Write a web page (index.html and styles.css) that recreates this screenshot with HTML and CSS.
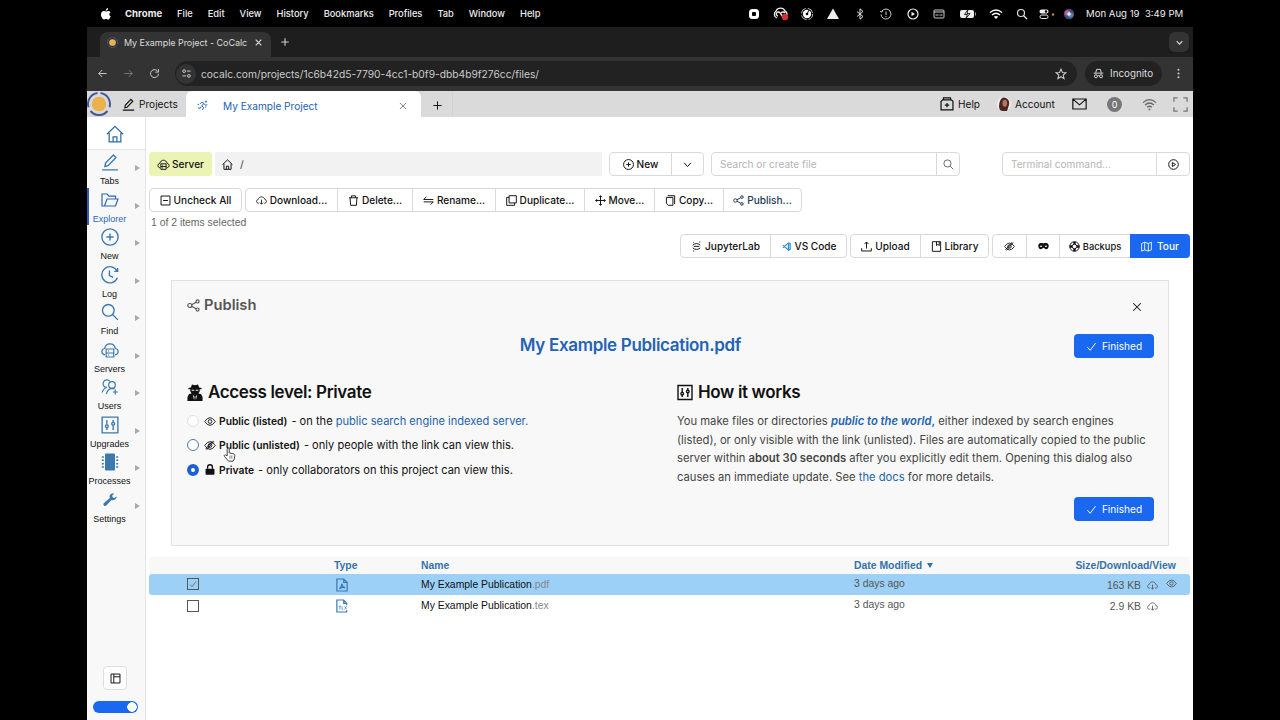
FILE: index.html
```
<!DOCTYPE html>
<html lang="en">
<head>
  <meta charset="UTF-8" />
  <meta name="viewport" content="width=device-width, initial-scale=1.0"/>
  <title>My Example Project - CoCalc</title>
  <link rel="stylesheet" href="styles.css">
</head>
<body>
  <!-- icon sprite -->
  <svg class="sprite" viewBox="0 0 16 16">
    <symbol id="i-apple" viewBox="0 0 16 16"><path fill="currentColor" stroke="none" d="M10.8 0c.1 1-.3 1.900-.9 2.600-.6.700-1.400 1.200-2.300 1.100-.1-.9.300-1.900.9-2.500C9.100.500 10 .1 10.800 0zM14 5.500c-1 .6-1.600 1.500-1.600 2.700 0 1.300.8 2.400 2 2.900-.3.800-.6 1.500-1.100 2.200-.7 1-1.400 2.100-2.500 2.100s-1.400-.7-2.700-.7-1.700.7-2.700.7c-1.100 0-1.900-1-2.600-2C1.300 11.300.8 8.200 2 6.100c.7-1.300 2-2 3.300-2 1.100 0 2 .7 2.800.7.700 0 1.900-.8 3.300-.7 1 0 2 .5 2.600 1.400z"/></symbol>
    <symbol id="i-x" viewBox="0 0 16 16"><path d="M3 3l10 10M13 3L3 13"/></symbol>
    <symbol id="i-plus" viewBox="0 0 16 16"><path d="M8 2v12M2 8h12"/></symbol>
    <symbol id="i-left" viewBox="0 0 16 16"><path d="M14 8H2.500M7.500 3l-5 5 5 5"/></symbol>
    <symbol id="i-right" viewBox="0 0 16 16"><path d="M2 8h11.500M8.500 3l5 5-5 5"/></symbol>
    <symbol id="i-reload" viewBox="0 0 16 16"><path d="M13 5.200A5.800 5.800 0 1 0 13.800 8.500M13.800 1.500V6H9.300"/></symbol>
    <symbol id="i-tune" viewBox="0 0 16 16"><circle cx="4.500" cy="4.500" r="2"/><circle cx="11.500" cy="11.500" r="2"/><path d="M8.500 4.500H14M2 11.500h5.500"/></symbol>
    <symbol id="i-star" viewBox="0 0 16 16"><path d="M8 1.500l1.900 4.400 4.600.4-3.500 3.100 1.100 4.700L8 11.600l-4.100 2.500L5 9.400 1.500 6.300l4.600-.4z"/></symbol>
    <symbol id="i-incog" viewBox="0 0 16 16"><path d="M1 7.500h14M4 7l1.200-5h5.600L12 7"/><circle cx="4.300" cy="12" r="2.200"/><circle cx="11.700" cy="12" r="2.200"/><path d="M6.500 11.500q1.500-1 3 0"/></symbol>
    <symbol id="i-dots" viewBox="0 0 16 16"><g fill="currentColor" stroke="none"><circle cx="8" cy="2.500" r="1.500"/><circle cx="8" cy="8" r="1.500"/><circle cx="8" cy="13.500" r="1.500"/></g></symbol>
    <symbol id="i-chev" viewBox="0 0 16 16"><path d="M3 5.500l5 5.500 5-5.500"/></symbol>
    <symbol id="i-logo" viewBox="0 0 24 24"><circle cx="12" cy="12" r="7.300" fill="#eab14c" stroke="none"/><g fill="none" stroke="#425b98" stroke-width="2"><path d="M10.500 1.100A11 11 0 0 0 1.500 15.200"/><path d="M13.500 1.100A11 11 0 0 1 22.500 15.200"/><path d="M3.500 19a11 11 0 0 0 17 0"/></g></symbol>
    <symbol id="i-edit" viewBox="0 0 16 16"><path d="M1 15h14M3.500 12l.5-3 7-7.300 2.300 2.300-7 7.300z"/></symbol>
    <symbol id="i-run" viewBox="0 0 16 16"><path d="M4.500 5.500L7 3.500l3 1.200-3 4 2.500 2-1.500 4M6 9.500L4.500 12 1.500 11.500M10.500 5.500l1.500 2 3-.5M1 6.500l2-.5M11.500 11l2-1.500"/><circle cx="13" cy="2.300" r="1"/></symbol>
    <symbol id="i-help" viewBox="0 0 16 16"><path d="M1.200 5L3 3.200h10L14.800 5v9.800H1.200zM4 3V1h8v2M8 6.800v5M5.500 9.300h5"/></symbol>
    <symbol id="i-mail" viewBox="0 0 18 14"><path d="M1 1h16v12H1zM1.500 1.500L9 8l7.500-6.500"/></symbol>
    <symbol id="i-wifi" viewBox="0 0 16 14"><path d="M1 5q7-6.500 14 0M3.300 7.600q4.700-4.500 9.400 0M5.500 10q2.500-2.300 5 0"/><circle cx="8" cy="12.300" r="1" fill="currentColor" stroke="none"/></symbol>
    <symbol id="i-full" viewBox="0 0 16 16"><path d="M1 5V1h4M11 1h4v4M15 11v4h-4M5 15H1v-4"/></symbol>
    <symbol id="i-home" viewBox="0 0 16 16"><path d="M.8 8.200L8 1.200l7.200 7M2.800 7v8h10.400V7M6.300 15v-4.500h3.400V15"/></symbol>
    <symbol id="i-folder" viewBox="0 0 18 14"><path d="M3.500 13H1V1h5l2 2.200h6.500V6M3.500 13L6 6h11l-2.500 7z"/></symbol>
    <symbol id="i-pluso" viewBox="0 0 16 16"><circle cx="8" cy="8" r="7.200"/><path d="M8 4.800v6.400M4.800 8h6.400"/></symbol>
    <symbol id="i-clock" viewBox="0 0 16 16"><path d="M14.300 4.500A7.200 7.200 0 1 0 14.600 10.500M14.800 1.800v3h-3M7.500 4v4.500l3.300 1.700"/></symbol>
    <symbol id="i-find" viewBox="0 0 16 16"><circle cx="6.500" cy="6.500" r="5.200"/><path d="M10.300 10.300L15 15"/></symbol>
    <symbol id="i-server" viewBox="0 0 18 16"><path d="M4 12.800C-.2 12.500 0 7 3.600 6.500 5 .2 13 .2 14.400 6.500 18 7 18.200 12.500 14 12.800"/><path d="M5.200 7h7.600v8H5.200zM5.200 11h7.600M7 9h1M7 13h1"/></symbol>
    <symbol id="i-users" viewBox="0 0 18 16"><path d="M6 8.500A3.800 3.800 0 1 1 8.800 2.300M6 8.500Q2 9.500 1.200 13.500"/><circle cx="11" cy="6" r="3.300"/><path d="M5.500 15q1-5.500 5.500-5.700 1.500 0 2.500.6M14.300 10.500v5M11.800 13h5"/></symbol>
    <symbol id="i-sliders" viewBox="0 0 16 16"><path d="M1 1h14v14H1zM5.200 3.500v4.200M5.200 10.500v2M10.800 3.500v2M10.800 8.500v4"/><circle cx="5.200" cy="9.200" r="1.300"/><circle cx="10.800" cy="6.900" r="1.300"/></symbol>
    <symbol id="i-chip" viewBox="0 0 18 18"><rect x="4" y=".5" width="10" height="17" rx="1" fill="currentColor" stroke="none"/><path d="M.8 4h2M.8 7.300h2M.8 10.700h2M.8 14h2M15.200 4h2M15.200 7.300h2M15.200 10.700h2M15.200 14h2" stroke-width="1.600"/></symbol>
    <symbol id="i-wrench" viewBox="0 0 20 20"><path fill="currentColor" stroke="none" d="M17.300 6.200l-2.600 1.500-1.900-.8-.3-2L14.700 3C12.700 2.300 10.700 3 9.800 4.700c-.5 1.100-.4 2.100 0 3L3.400 13.200c-1.900 1.900.6 4.600 2.500 2.900l5.700-6.200c1.100.4 2.400.3 3.500-.2 1.700-.8 2.500-2.200 2.200-3.500z"/></symbol>
    <symbol id="i-minus" viewBox="0 0 16 16"><path d="M1.500 1.500h13v13h-13zM4.500 8h7"/></symbol>
    <symbol id="i-cloud" viewBox="0 0 18 16"><path d="M4.500 12.500C-.3 12.500 0 7 3.600 6.300 5 .6 13 .6 14.400 6.300 18 7 18.300 12.500 13.500 12.500M9 6.500V14M6.500 11.500L9 14l2.500-2.500"/></symbol>
    <symbol id="i-trash" viewBox="0 0 16 16"><path d="M1.500 4h13M3 4l.8 11h8.400L13 4M5 4V1.200h6V4"/></symbol>
    <symbol id="i-swap" viewBox="0 0 16 16"><path d="M1 6.500h14M1 6.500L5 2.500M15 10H1M15 10l-4 4"/></symbol>
    <symbol id="i-dup" viewBox="0 0 16 16"><path d="M4.500 1h10.500v10.500H4.500zM4.500 3.500H1V15h11.500v-3.500"/></symbol>
    <symbol id="i-move" viewBox="0 0 16 16"><path d="M8 1v14M1 8h14M6 3l2-2 2 2M6 13l2 2 2-2M3 6L1 8l2 2M13 6l2 2-2 2"/></symbol>
    <symbol id="i-copy" viewBox="0 0 16 16"><path d="M4 1h10v12M2 3.500h9.500V15H5l-3-3z"/></symbol>
    <symbol id="i-share" viewBox="0 0 16 16"><circle cx="3.500" cy="8" r="2.500"/><circle cx="13" cy="3" r="1.900"/><circle cx="13" cy="13" r="1.900"/><path d="M5.700 7L11.300 4M5.700 9l5.600 3"/></symbol>
    <symbol id="i-jup" viewBox="0 0 16 16"><path d="M2.500 6q5.500-4.500 11 0M2.500 10q5.500 4.500 11 0M4 7.800h8"/><path d="M3 2.500h1M12 1.500h1.500M3 14.500h1.500"/></symbol>
    <symbol id="i-vs" viewBox="0 0 16 16"><path d="M11.500 1.500v13L1.500 5.500M11.500 1.500L1.500 10.500M11.500 1.500l3 1.500v10l-3 1.500" stroke-width="2.200"/></symbol>
    <symbol id="i-upload" viewBox="0 0 16 16"><path d="M1 10.500V14.500h14v-4M8 11V1.500M5 4.500l3-3 3 3"/></symbol>
    <symbol id="i-book" viewBox="0 0 16 16"><path d="M2 1h12v14H2zM8 1v5.500l2-1.500 2 1.500V1"/></symbol>
    <symbol id="i-eye" viewBox="0 0 18 14"><path d="M1 7Q9-4.500 17 7 9 18.500 1 7z"/><circle cx="9" cy="7" r="2.800"/></symbol>
    <symbol id="i-eyeno" viewBox="0 0 18 14"><path d="M1 7Q9-4.500 17 7 9 18.500 1 7z"/><circle cx="9" cy="7" r="2.800"/><path d="M15 .5L4 13.500M12.800.2L2.500 12.400"/></symbol>
    <symbol id="i-mask" viewBox="0 0 18 12"><path fill="currentColor" stroke="none" fill-rule="evenodd" d="M9 1c3.500-1.200 8-.6 8.500 3 .4 3.500-1.600 6.500-4 6.500S10.300 8 9 8s-2.100 2.500-4.500 2.500S.1 7.500.5 4C1 .4 5.500-.2 9 1zM3 5.500c1 1.800 3.200 1.800 4 0-1-1.500-3-1.500-4 0zm8 0c.8 1.800 3 1.800 4 0-1-1.500-3-1.500-4 0z"/></symbol>
    <symbol id="i-ring" viewBox="0 0 16 16"><circle cx="8" cy="8" r="6.900"/><circle cx="8" cy="8" r="3.300"/><path d="M8 1v3.700M8 11.300V15M1 8h3.700M11.300 8H15" stroke-width="3.500"/></symbol>
    <symbol id="i-map" viewBox="0 0 18 16"><path d="M1 3l5-2 6 2 5-2v12.500l-5 2-6-2-5 2zM6 1v12.500M12 3v12.500"/></symbol>
    <symbol id="i-play" viewBox="0 0 16 16"><circle cx="8" cy="8" r="7"/><path d="M6.300 5v6l4.700-3z"/></symbol>
    <symbol id="i-check" viewBox="0 0 16 16"><path d="M2 9l4 4.500L14 3"/></symbol>
    <symbol id="i-spy" viewBox="0 0 16 18"><path fill="currentColor" stroke="none" fill-rule="evenodd" d="M4.800.6L8 1.300l3.200-.7 1.200 3 2.600.7v1.200h-2v2.300L11.600 10l2.700.7 1.700 3V18H0v-4.300l1.700-3L4.400 10 3 7.800V5.500H1V4.300l2.600-.7zM4.500 6v1.200h2.700V6zm4.300 0v1.200h2.700V6zM5.700 11.500L7 17l.5-3.500zm4.600 0L8.500 13.500 9 17z"/></symbol>
    <symbol id="i-lock" viewBox="0 0 16 16"><rect x="1.500" y="7" width="13" height="8.500" rx="1" fill="currentColor" stroke="none"/><path d="M4.500 7V4.500a3.500 3.500 0 0 1 7 0V7" stroke-width="2"/></symbol>
    <symbol id="i-pdf" viewBox="0 0 14 16"><path d="M1 1h8l4 4v10H1zM9 1v4h4M4 12.500q3-3 2.700-6 .8 4 4 4.500-3.700-.7-6.700 1.500z"/></symbol>
    <symbol id="i-tex" viewBox="0 0 14 16"><path d="M12.500 7V5L9 1H1v14h11.500v-2M9 1v4h3.500"/><path d="M3 8.300h3M4.500 8.300V12M7 8.300v3.500h1.500M10 8.300l2.500 3.700M12.500 8.300L10 12" stroke-width=".8"/></symbol>
    <symbol id="i-layout" viewBox="0 0 16 16"><path d="M1.500 1.500h13v13h-13zM5.500 1.500v13M5.500 5.500h9"/></symbol>
  </svg>

  <div class="screen">
    <header class="menubar">
      <svg class="ic apple"><use href="#i-apple"/></svg>
      <nav class="menus">
        <b>Chrome</b><span>File</span><span>Edit</span><span>View</span><span>History</span><span>Bookmarks</span><span>Profiles</span><span>Tab</span><span>Window</span><span>Help</span>
      </nav>
      <div class="tray">
        <svg viewBox="0 0 18 14"><rect x="4" y="2" width="10" height="10" rx="3.500" fill="#fff"/><rect x="7" y="5" width="4" height="4" rx="1" fill="#000"/></svg>
        <svg viewBox="0 0 18 14"><path d="M5 11a4 4 0 0 1-1-7 5 5 0 0 1 9 0 4 4 0 0 1 2 4M6 9a2 2 0 1 1 2-3l3 4M9 6a2.500 2.500 0 0 1 4 0" stroke="#eee" stroke-width="1.300" fill="none"/><circle cx="13" cy="10" r="3.200" fill="#d9302c"/></svg>
        <svg viewBox="0 0 18 14"><circle cx="9" cy="7" r="4.200" fill="#fff"/><circle cx="9" cy="7" r="5.700" fill="none" stroke="#bbb" stroke-dasharray="7 2"/><circle cx="9" cy="7" r="1.300" fill="#000"/><path d="M9 7l2-4" stroke="#000"/></svg>
        <svg viewBox="0 0 18 14"><path d="M9 1.500l6 10.500H3z" fill="#eee"/></svg>
        <svg viewBox="0 0 18 14"><path d="M6 4.500l6 5-3 2.700V1.800l3 2.700-6 5" fill="none" stroke="#ddd"/></svg>
        <svg viewBox="0 0 18 14"><path d="M5 4a5 5 0 1 1-1 3.500M3 4.500l2 .5.500-2M9 4.500V8M9 9v1" fill="none" stroke="#ccc"/></svg>
        <svg viewBox="0 0 18 14"><circle cx="9" cy="7" r="5" fill="none" stroke="#eee" stroke-width="1.200"/><path d="M7.500 4.700v4.600L11 7z" fill="#eee"/></svg>
        <svg viewBox="0 0 18 14"><rect x="4" y="3" width="10" height="8" rx="1" fill="none" stroke="#ccc"/><path d="M4 5h10M5.500 8h3M9.500 8h3" stroke="#ccc"/></svg>
        <svg class="battery" viewBox="0 0 20 14"><rect x="2" y="3" width="14" height="8" rx="2" fill="#eee"/><path d="M17.500 5.500v3" stroke="#999"/><path d="M10 2.500L6.500 7.500h3L7.500 12l4.500-5.500H9z" fill="#eee" stroke="#000" stroke-width=".8"/></svg>
        <svg viewBox="0 0 18 14"><path d="M3 5.500q6-5 12 0M5 8q4-3.500 8 0" fill="none" stroke="#fff" stroke-width="1.500"/><path d="M9 12L6.800 9.800q2.200-1.600 4.400 0z" fill="#fff"/></svg>
        <svg viewBox="0 0 18 14"><circle cx="8" cy="6" r="3.500" fill="none" stroke="#ddd" stroke-width="1.200"/><path d="M10.700 8.700L14 12" stroke="#ddd" stroke-width="1.300"/></svg>
        <svg class="near" viewBox="0 0 18 14"><rect x="2.500" y="2.500" width="9" height="4" rx="2" fill="#eee"/><circle cx="9" cy="4.500" r="1.200" fill="#000"/><rect x="3" y="8" width="8" height="3.500" rx="1.700" fill="none" stroke="#eee"/><circle cx="16" cy="7.500" r="1.300" fill="#c5853c"/></svg>
        <svg class="near" viewBox="0 0 18 14"><circle cx="9" cy="7" r="5.200" fill="#474a78"/><circle cx="7.500" cy="6" r="2.800" fill="#b56297"/><circle cx="10.500" cy="8" r="2.600" fill="#3c92ac"/><circle cx="9" cy="7" r="1.700" fill="#eef"/></svg>
      </div>
      <span class="clock">Mon Aug 19&nbsp; 3:49 PM</span>
    </header>

    <div class="tabstrip">
      <div class="browser-tab">
        <svg class="ic favicon"><use href="#i-logo"/></svg>
        <span>My Example Project - CoCalc</span>
        <svg class="ic tab-x"><use href="#i-x"/></svg>
      </div>
      <svg class="ic new-tab"><use href="#i-plus"/></svg>
      <div class="tab-menu"><svg class="ic"><use href="#i-chev"/></svg></div>
    </div>

    <div class="toolbar">
      <svg class="ic"><use href="#i-left"/></svg>
      <svg class="ic dim"><use href="#i-right"/></svg>
      <svg class="ic"><use href="#i-reload"/></svg>
      <div class="address">
        <i class="site"><svg class="ic"><use href="#i-tune"/></svg></i>
        <span>cocalc.com/projects/1c6b42d5-7790-4cc1-b0f9-dbb4b9f276cc/files/</span>
        <svg class="ic star"><use href="#i-star"/></svg>
      </div>
      <div class="incognito"><svg class="ic"><use href="#i-incog"/></svg>Incognito</div>
      <svg class="ic more"><use href="#i-dots"/></svg>
    </div>

    <div class="topbar">
      <svg class="ic logo"><use href="#i-logo"/></svg>
      <div class="projects"><svg class="ic"><use href="#i-edit"/></svg>Projects</div>
      <div class="project-tab">
        <svg class="ic run"><use href="#i-run"/></svg>
        <span>My Example Project</span>
        <svg class="ic close"><use href="#i-x"/></svg>
      </div>
      <div class="add-tab"><svg class="ic"><use href="#i-plus"/></svg></div>
      <div class="top-help"><svg class="ic"><use href="#i-help"/></svg>Help</div>
      <div class="account">
        <svg class="avatar" viewBox="0 0 14 14"><circle cx="7" cy="7" r="7" fill="#f1eeee"/><path d="M3 13Q1 9 3 4 5-1 9 1q4 2 3 7l-2 6H5z" fill="#4a2624"/><ellipse cx="7.800" cy="6.300" rx="2.300" ry="3.500" fill="#b9755c"/></svg>
        Account
      </div>
      <svg class="ic mail"><use href="#i-mail"/></svg>
      <span class="bell">0</span>
      <svg class="ic wifi"><use href="#i-wifi"/></svg>
      <svg class="ic full"><use href="#i-full"/></svg>
    </div>

    <div class="workspace">
      <aside class="side">
        <div class="side-home"><svg class="ic"><use href="#i-home"/></svg></div>
        <ul class="side-menu">
          <li><svg class="ic"><use href="#i-edit"/></svg>Tabs</li>
          <li class="active"><svg class="ic"><use href="#i-folder"/></svg>Explorer</li>
          <li><svg class="ic"><use href="#i-pluso"/></svg>New</li>
          <li><svg class="ic"><use href="#i-clock"/></svg>Log</li>
          <li><svg class="ic"><use href="#i-find"/></svg>Find</li>
          <li><svg class="ic"><use href="#i-server"/></svg>Servers</li>
          <li><svg class="ic"><use href="#i-users"/></svg>Users</li>
          <li><svg class="ic"><use href="#i-sliders"/></svg>Upgrades</li>
          <li><svg class="ic"><use href="#i-chip"/></svg>Processes</li>
          <li><svg class="ic"><use href="#i-wrench"/></svg>Settings</li>
        </ul>
        <button class="layout-btn"><svg class="ic"><use href="#i-layout"/></svg></button>
        <div class="switch"></div>
      </aside>

      <main class="main">
        <div class="row path-row">
          <button class="server"><svg class="ic wide"><use href="#i-server"/></svg>Server</button>
          <div class="crumbs"><svg class="ic"><use href="#i-home"/></svg>/</div>
          <div class="group new-group">
            <button><svg class="ic"><use href="#i-pluso"/></svg>New</button>
            <button><svg class="ic"><use href="#i-chev"/></svg></button>
          </div>
          <div class="group search">
            <span class="field">Search or create file</span>
            <button><svg class="ic"><use href="#i-find"/></svg></button>
          </div>
          <div class="group terminal">
            <span class="field">Terminal command...</span>
            <button><svg class="ic"><use href="#i-play"/></svg></button>
          </div>
        </div>

        <div class="row action-row">
          <div class="group uncheck"><button><svg class="ic"><use href="#i-minus"/></svg>Uncheck All</button></div>
          <div class="group actions">
            <button><svg class="ic"><use href="#i-cloud"/></svg>Download...</button>
            <button><svg class="ic"><use href="#i-trash"/></svg>Delete...</button>
            <button><svg class="ic"><use href="#i-swap"/></svg>Rename...</button>
            <button><svg class="ic"><use href="#i-dup"/></svg>Duplicate...</button>
            <button><svg class="ic"><use href="#i-move"/></svg>Move...</button>
            <button><svg class="ic"><use href="#i-copy"/></svg>Copy...</button>
            <button class="current"><svg class="ic"><use href="#i-share"/></svg>Publish...</button>
          </div>
        </div>
        <div class="selected">1 of 2 items selected</div>

        <div class="row tool-row">
          <div class="group labs">
            <button><svg class="ic"><use href="#i-jup"/></svg>JupyterLab</button>
            <button><svg class="ic vs"><use href="#i-vs"/></svg>VS Code</button>
          </div>
          <div class="group files">
            <button><svg class="ic"><use href="#i-upload"/></svg>Upload</button>
            <button><svg class="ic"><use href="#i-book"/></svg>Library</button>
          </div>
          <div class="group extras">
            <button><svg class="ic"><use href="#i-eyeno"/></svg></button>
            <button><svg class="ic"><use href="#i-mask"/></svg></button>
            <button class="small"><svg class="ic"><use href="#i-ring"/></svg>Backups</button>
            <button class="tour"><svg class="ic"><use href="#i-map"/></svg>Tour</button>
          </div>
        </div>

        <section class="card">
          <div class="card-head">
            <h4><svg class="ic"><use href="#i-share"/></svg>Publish</h4>
            <svg class="ic card-x"><use href="#i-x"/></svg>
          </div>
          <div class="card-title">
            <h2>My Example Publication.pdf</h2>
            <button class="primary"><svg class="ic"><use href="#i-check"/></svg>Finished</button>
          </div>
          <div class="columns">
            <div class="access">
              <h3><svg class="ic spy"><use href="#i-spy"/></svg>Access level: Private</h3>
              <label><i class="radio off"></i><svg class="ic wide"><use href="#i-eye"/></svg><b>Public (listed)</b><span>- on the <a>public search engine indexed server.</a></span></label>
              <label><i class="radio hover"></i><svg class="ic wide"><use href="#i-eyeno"/></svg><b>Public (unlisted)</b><span>- only people with the link can view this.</span></label>
              <label><i class="radio on"></i><svg class="ic"><use href="#i-lock"/></svg><b>Private</b><span>- only collaborators on this project can view this.</span></label>
            </div>
            <div class="how">
              <h3><svg class="ic"><use href="#i-sliders"/></svg>How it works</h3>
              <p>You make files or directories <a><b><em>public to the world</em>,</b></a> either indexed by search engines<br>
              (listed), or only visible with the link (unlisted). Files are automatically copied to the public<br>
              server within <b>about 30 seconds</b> after you explicitly edit them. Opening this dialog also<br>
              causes an immediate update. See <a>the docs</a> for more details.</p>
            </div>
          </div>
          <button class="primary last"><svg class="ic"><use href="#i-check"/></svg>Finished</button>
        </section>

        <div class="listing">
          <div class="line head">
            <span></span><span>Type</span><span>Name</span><span>Date Modified <i class="caret"></i></span><span class="size">Size/Download/View</span>
          </div>
          <div class="line picked">
            <span><i class="box"><svg class="ic"><use href="#i-check"/></svg></i></span>
            <span class="type"><svg class="ic"><use href="#i-pdf"/></svg></span>
            <span class="name">My Example Publication<small>.pdf</small></span>
            <span class="date">3 days ago</span>
            <span class="size">163 KB<svg class="ic"><use href="#i-cloud"/></svg><svg class="ic view"><use href="#i-eye"/></svg></span>
          </div>
          <div class="line">
            <span><i class="box"></i></span>
            <span class="type"><svg class="ic"><use href="#i-tex"/></svg></span>
            <span class="name">My Example Publication<small>.tex</small></span>
            <span class="date">3 days ago</span>
            <span class="size">2.9 KB<svg class="ic"><use href="#i-cloud"/></svg><i class="view"></i></span>
          </div>
        </div>
      </main>
    </div>

    <svg class="pointer" viewBox="0 0 14 16"><path d="M4.500 9.500V2.300c0-1.800 2.200-1.800 2.200 0v4l4.800 1c1 .3 1.300 1 1.200 2l-.6 3.700-1.300 2.200H6L1.500 10c-.7-1.200.8-2.200 1.700-1.300z" fill="#fff" stroke="#333"/><path d="M7.500 9v3.500M9.500 9v3.500" stroke="#555" stroke-width=".8"/></svg>
  </div>
</body>
</html>
```

FILE: styles.css
```
* {
  box-sizing: border-box;
}
body {
  margin: 0;
  background: #000;
  overflow: hidden;
}
.screen {
  position: relative;
  width: 1106px;
  height: 720px;
  margin-left: 87px;
  font-family: Inter, "Liberation Sans", sans-serif;
  font-size: 10.100px;
  color: #111;
  white-space: nowrap;
  background: #fff;
}
.sprite {
  display: none;
}
.ic {
  width: 11px;
  height: 11px;
  flex: none;
  fill: none;
  stroke: currentColor;
  stroke-width: 1.4;
}
.ic.wide {
  width: 13px;
}
button {
  font: inherit;
  color: inherit;
  padding: 0;
  border: 0;
  background: none;
}
a {
  color: #2463ae;
}

/* mac menu bar */
.menubar {
  display: flex;
  align-items: center;
  height: 27px;
  padding: 0 11px 0 13px;
  background: #000;
  color: #eee;
  font-size: 9.300px;
  font-weight: 500;
}
.menubar b {
  font-size: 9.600px;
}
.apple {
  width: 12px;
  height: 12px;
  color: #fff;
}
.menus {
  display: flex;
  gap: 15px;
  margin-left: 13px;
}
.tray {
  display: flex;
  margin: 0 8px 0 auto;
  gap: 8.400px;
}
.tray svg {
  width: 18px;
  height: 14px;
}
.tray .battery {
  width: 20px;
  margin-left: 2px;
}
.tray .near {
  margin-left: -3px;
}
.clock {
  width: 96px;
  font-size: 9.600px;
  font-weight: 400;
}

/* browser */
.tabstrip {
  display: flex;
  align-items: center;
  height: 30px;
  padding-left: 13px;
  background: #1e1e1e;
}
.browser-tab {
  display: flex;
  align-items: center;
  width: 171px;
  height: 25px;
  margin-top: 5px;
  padding: 0 8px 5px 7px;
  border-radius: 8px 8px 0 0;
  background: #333;
  color: #ddd;
  font-size: 9px;
  letter-spacing: -.05px;
}
.favicon {
  width: 11px;
  height: 11px;
  margin-right: 6px;
}
.tab-x {
  width: 9px;
  height: 9px;
  margin-left: auto;
  stroke-width: 2;
}
.new-tab {
  width: 10px;
  height: 10px;
  margin-left: 9px;
  color: #ccc;
  stroke-width: 1.800;
}
.tab-menu {
  display: flex;
  align-items: center;
  justify-content: center;
  width: 20px;
  height: 20px;
  margin: 0 4px 0 auto;
  border-radius: 6px;
  background: #333;
  color: #ddd;
}
.tab-menu .ic {
  width: 9px;
  stroke-width: 2;
}
.toolbar {
  display: flex;
  align-items: center;
  height: 34px;
  padding: 0 9px 1px 10px;
  gap: 15px;
  background: #333;
  color: #ccc;
  font-size: 10.250px;
}
.toolbar .dim {
  color: #777;
}
.address {
  display: flex;
  align-items: center;
  width: 902px;
  height: 25px;
  padding: 0 10px 0 1px;
  border-radius: 13px;
  background: #222;
}
.site {
  display: flex;
  align-items: center;
  justify-content: center;
  width: 20px;
  height: 20px;
  margin-right: 5px;
  border-radius: 10px;
  background: #333;
}
.star {
  width: 12px;
  height: 12px;
  margin-left: auto;
}
.incognito {
  display: flex;
  align-items: center;
  width: 77px;
  height: 25px;
  margin-left: -7px;
  padding-left: 8px;
  gap: 6px;
  border-radius: 13px;
  background: #222;
  font-size: 9.800px;
  color: #ddd;
}
.toolbar .more {
  margin-left: -4px;
}

/* cocalc top bar */
.topbar {
  display: flex;
  align-items: center;
  height: 26px;
  background: #dadada;
}
.logo {
  width: 24px;
  height: 24px;
}
.projects {
  display: flex;
  align-items: center;
  width: 75px;
  padding-left: 11px;
  gap: 4px;
}
.projects .ic {
  width: 13px;
  height: 13px;
}
.project-tab {
  display: flex;
  align-items: center;
  align-self: stretch;
  width: 235px;
  padding: 3px 13px 0 11px;
  border-radius: 6px 6px 0 0;
  background: #fff;
  color: #2463ae;
}
.project-tab span {
  margin-left: 15px;
}
.project-tab .close {
  width: 10px;
  height: 10px;
  margin-left: auto;
  color: #777;
}
.add-tab {
  display: flex;
  align-items: center;
  justify-content: center;
  align-self: stretch;
  width: 31px;
  margin-left: 1px;
  border-right: 1px solid #d2d2d2;
  padding-top: 2px;
}
.top-help {
  display: flex;
  align-items: center;
  gap: 4px;
  width: 57px;
  margin-left: auto;
}
.top-help .ic {
  width: 14px;
  height: 14px;
}
.account {
  display: flex;
  align-items: center;
  gap: 4px;
  width: 75px;
}
.avatar {
  width: 14px;
  height: 14px;
}
.mail {
  width: 15px;
  height: 12px;
}
.bell {
  width: 15px;
  height: 15px;
  margin-left: 20px;
  border-radius: 50%;
  background: #777;
  color: #fff;
  font-size: 9px;
  line-height: 15px;
  text-align: center;
}
.wifi {
  width: 15px;
  height: 13px;
  margin-left: 20px;
  color: #666;
}
.full {
  width: 15px;
  height: 15px;
  margin: 0 5px 0 16px;
  color: #777;
}

/* sidebar */
.workspace {
  display: flex;
  height: 603px;
}
.side {
  display: flex;
  flex: none;
  flex-direction: column;
  width: 59px;
  border-right: 1px solid #e6e6e6;
  background: #f8f8f8;
  font-family: "Liberation Sans", Arial, sans-serif;
  font-size: 9px;
}
.side-home {
  height: 33px;
  padding: 8px 19px;
  background: #fff;
  border-bottom: 1px solid #e6e6e6;
  color: #326ca0;
}
.side-home .ic {
  width: 18px;
  height: 18px;
  stroke-width: 1.100;
}
.side-menu {
  margin: 0;
  padding: 0;
  list-style: none;
}
.side-menu li {
  display: flex;
  position: relative;
  flex-direction: column;
  align-items: center;
  justify-content: space-between;
  height: 37.500px;
  padding: 3px 15px 1.500px 0;
  border-left: 2px solid transparent;
}
.side-menu li .ic {
  width: 18px;
  height: 18px;
  color: #3a78ad;
  stroke-width: 1.200;
}
.side-menu li::after {
  content: "";
  position: absolute;
  right: 5px;
  top: 15px;
  border: 3.500px solid transparent;
  border-left: 5px solid #aaa;
  border-right: 0;
}
.side-menu .active {
  border-left-color: #2f5fb5;
  color: #2b66c0;
}
.side-menu .active .ic {
  color: #2f66b5;
}
.layout-btn {
  display: flex;
  align-items: center;
  justify-content: center;
  width: 24px;
  height: 24px;
  margin: auto 0 11px 16px;
  border: 1px solid #ddd;
  border-radius: 4px;
  background: #fff;
}
.switch {
  width: 45px;
  height: 12px;
  margin: 0 0 7px 6px;
  border-radius: 6px;
  background: radial-gradient(circle at 39px 6px, #fff 4.500px, transparent 5px) #1b68f0;
}

/* explorer */
.main {
  flex: 1;
  padding: 35px 3px 0 3px;
}
.row {
  display: flex;
  height: 24px;
  font-weight: 500;
}
.group {
  display: flex;
  border: 1px solid #d9d9d9;
  border-radius: 4px;
  background: #fff;
}
.group button {
  display: flex;
  align-items: center;
  justify-content: center;
  gap: 3px;
}
.group > * + * {
  border-left: 1px solid #d9d9d9;
}
.field {
  flex: 1;
  padding-left: 8px;
  line-height: 22px;
  font-weight: 400;
  color: #b5b5b5;
}
.server {
  display: flex;
  align-items: center;
  justify-content: center;
  gap: 2px;
  width: 63px;
  border-radius: 3px;
  background: #ebf4b4;
}
.crumbs {
  display: flex;
  align-items: center;
  gap: 7px;
  width: 387px;
  margin-left: 3px;
  padding-left: 7px;
  background: #f2f2f2;
  color: #555;
}
.crumbs .ic {
  color: #111;
}
.new-group {
  width: 95px;
  margin-left: 7px;
}
.new-group button:first-child {
  flex: 1;
}
.new-group button:last-child {
  width: 32px;
}
.search {
  width: 249px;
  margin-left: 7px;
}
.search button {
  width: 23px;
  color: #666;
}
.terminal {
  width: 188px;
  margin-left: 42px;
}
.terminal button {
  width: 33px;
}
.action-row {
  margin-top: 12px;
}
.uncheck {
  width: 93px;
}
.uncheck button {
  flex: 1;
}
.actions {
  display: grid;
  grid-template-columns: 91px 75px 83px 89px 70px 69px 78px;
  width: 557px;
  margin-left: 3px;
}
.current {
  color: #1c3a57;
}
.selected {
  padding: 5px 0 0 2px;
  height: 22px;
  font-family: "Liberation Sans", Arial, sans-serif;
  font-size: 10.400px;
  color: #666;
}
.tool-row {
  justify-content: flex-end;
  gap: 3px;
}
.labs {
  display: grid;
  grid-template-columns: 89px 76px;
  width: 167px;
}
.labs button:last-child {
  padding-left: 2px;
}
.ic.vs {
  width: 9px;
  height: 9px;
  color: #2f8fd3;
}
.files {
  display: grid;
  grid-template-columns: 69px 68px;
  width: 139px;
}
.extras {
  display: grid;
  grid-template-columns: 33px 33px 71px 59px;
  width: 198px;
}
.group .small {
  font-size: 9.300px;
}
.group .tour {
  margin: -1px -1px -1px 0;
  border: 0;
  gap: 5px;
  border-radius: 0 4px 4px 0;
  background: #1b68f0;
  color: #fff;
}

/* publish card */
.card {
  width: 998px;
  height: 266px;
  margin: 22px 0 0 22px;
  padding: 13px 14px 0 15px;
  border: 1px solid #e2e2e2;
  background: #f8f8f8;
}
.card h2, .card h3, .card h4 {
  margin: 0;
}
.card-head {
  display: flex;
  align-items: center;
  justify-content: space-between;
  height: 22px;
  padding-right: 11px;
}
.card-head h4 {
  display: flex;
  align-items: center;
  gap: 4px;
  font-size: 14.700px;
  font-weight: 600;
  color: #555;
}
.card-head .ic {
  width: 13px;
  height: 13px;
}
.card-head .card-x {
  width: 12px;
  height: 12px;
  margin-top: 3px;
}
.card-title {
  display: flex;
  justify-content: space-between;
  height: 24px;
  margin-top: 18px;
}
.card-title h2 {
  width: 887px;
  font-size: 17px;
  line-height: 23px;
  font-weight: 600;
  letter-spacing: -.320px;
  text-align: center;
  color: #2463b4;
}
.primary {
  display: flex;
  align-items: center;
  justify-content: center;
  gap: 5px;
  width: 80px;
  height: 24px;
  border-radius: 4px;
  background: #1b68f0;
  color: #fff;
}
.columns {
  display: grid;
  grid-template-columns: 490px 1fr;
  height: 139px;
  padding-top: 23px;
}
.columns h3 {
  display: flex;
  align-items: center;
  gap: 5px;
  height: 22px;
  font-size: 17px;
  font-weight: 600;
  letter-spacing: -.350px;
}
.columns h3 .ic {
  width: 16px;
  height: 17px;
}
.access label {
  display: flex;
  align-items: center;
  height: 24.300px;
}
.access h3 {
  margin-bottom: 6px;
}
.access .ic {
  width: 12px;
  margin: 0 3px 0 5px;
}
.access h3 .ic {
  margin: 0;
}
.access b {
  font-size: 10.300px;
  margin-right: 4px;
}
.access b, .how b {
  font-weight: 600;
}
.access span {
  font-size: 11.100px;
}
.radio {
  width: 12px;
  height: 12px;
  border: 1px solid #e0e0e0;
  border-radius: 50%;
  background: #fff;
}
.radio.hover {
  border-color: #5479a6;
}
.radio.on {
  border: 4px solid #1d5fd6;
}
.how h3 {
  margin-bottom: 9px;
}
.how p {
  margin: 0;
  font-size: 11.230px;
  line-height: 18.500px;
  color: #444;
}
.last {
  margin: 0 0 0 auto;
}

/* file listing */
.listing {
  margin-top: 11px;
  font-family: "Liberation Sans", Arial, sans-serif;
  font-size: 10.400px;
  color: #555;
}
.line {
  display: grid;
  grid-template-columns: 147px 87px 433px 161px 1fr;
  height: 22px;
  padding-left: 38px;
  align-items: center;
}
.head {
  height: 17px;
  background: #f8f8f8;
  font-weight: bold;
  color: #3572a8;
}
.picked {
  height: 21px;
  border-radius: 3px;
  background: #9cd0f7;
}
.caret {
  display: inline-block;
  margin: 0 0 1px 2px;
  border: 3.500px solid transparent;
  border-top: 5px solid #3572a8;
  border-bottom: 0;
}
.box {
  display: block;
  width: 12px;
  height: 12px;
  margin-bottom: 1px;
  border: 1px solid #555;
}
.box .ic {
  display: block;
  width: 8px;
  height: 8px;
  margin: 1px;
}
.type .ic {
  display: block;
  width: 12px;
  height: 14px;
  margin-left: 2px;
  color: #3a78b5;
}
.name {
  padding-bottom: 1px;
  color: #111;
}
.name small {
  font-size: inherit;
  color: #888;
}
.date {
  padding-bottom: 3px;
}
.size {
  display: flex;
  align-items: center;
  justify-content: flex-end;
  padding: 1px 13px 0 0;
}
.head .size {
  padding: 0 14px 0 0;
  letter-spacing: .05px;
}
.size .ic {
  margin-left: 6px;
}
.size .view {
  width: 11px;
  height: 9px;
  margin: -3px 0 0 8px;
}

.pointer {
  position: absolute;
  left: 136px;
  top: 447px;
  width: 13px;
  height: 15px;
}
```
